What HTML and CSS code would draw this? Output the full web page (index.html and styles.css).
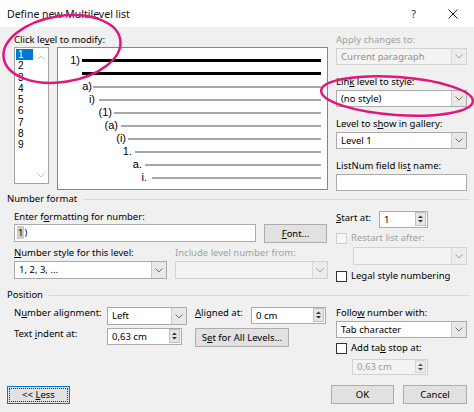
FILE: index.html
```html
<!DOCTYPE html>
<html lang="en">
<head>
<meta charset="utf-8">
<title>Define new Multilevel list</title>
<link rel="stylesheet" href="styles.css">
</head>
<body>
<div class="dialog">
  <div class="titlebar">
    <span class="title">Define new Multilevel list</span>
    <span class="help">?</span>
    <span class="close"><svg width="10" height="10" viewBox="0 0 10 10"><path d="M0.5 0.5 L9.5 9.5 M9.5 0.5 L0.5 9.5" stroke="#222" stroke-width="1" fill="none"/></svg></span>
  </div>

  <div class="top">
    <div class="levels">
      <div class="lbl">Click le<u>v</u>el to modify:</div>
      <div class="levels-row">
        <div class="listbox">
          <div class="items">
            <div class="item sel">1</div>
            <div class="item">2</div>
            <div class="item">3</div>
            <div class="item">4</div>
            <div class="item">5</div>
            <div class="item">6</div>
            <div class="item">7</div>
            <div class="item">8</div>
            <div class="item">9</div>
          </div>
          <div class="vscroll">
            <svg class="sc" width="8" height="5" viewBox="0 0 8 5"><path d="M0.5 4.5 L4 1 L7.5 4.5" fill="none" stroke="#c2c2c2"/></svg>
            <svg class="sc" width="8" height="5" viewBox="0 0 8 5"><path d="M0.5 0.5 L4 4 L7.5 0.5" fill="none" stroke="#c2c2c2"/></svg>
          </div>
        </div>
        <div class="preview">
          <div class="prow"><span class="num n1">1)</span><span class="bar dark"></span></div>
          <div class="prow"><span class="num n1"></span><span class="bar dark"></span></div>
          <div class="prow"><span class="num n3">a)</span><span class="bar"></span></div>
          <div class="prow"><span class="num n4">i)</span><span class="bar"></span></div>
          <div class="prow"><span class="num n5">(1)</span><span class="bar"></span></div>
          <div class="prow"><span class="num n6">(a)</span><span class="bar"></span></div>
          <div class="prow"><span class="num n7">(i)</span><span class="bar"></span></div>
          <div class="prow"><span class="num n8">1.</span><span class="bar"></span></div>
          <div class="prow"><span class="num n9">a.</span><span class="bar"></span></div>
          <div class="prow"><span class="num n10">i.</span><span class="bar"></span></div>
        </div>
      </div>
    </div>

    <div class="side">
      <div class="field">
        <div class="lbl dis">Apply changes to:</div>
        <div class="combo dis"><span class="val">Current paragraph</span><span class="drop"><svg width="8" height="5" viewBox="0 0 8 5"><path d="M0.5 0.5 L4 4 L7.5 0.5" fill="none" stroke="#9a9a9a"/></svg></span></div>
      </div>
      <div class="field">
        <div class="lbl">Lin<u>k</u> level to style:</div>
        <div class="combo"><span class="val">(no style)</span><span class="drop"><svg width="8" height="5" viewBox="0 0 8 5"><path d="M0.5 0.5 L4 4 L7.5 0.5" fill="none" stroke="#707070"/></svg></span></div>
      </div>
      <div class="field">
        <div class="lbl">Level to s<u>h</u>ow in gallery:</div>
        <div class="combo"><span class="val">Level 1</span><span class="drop"><svg width="8" height="5" viewBox="0 0 8 5"><path d="M0.5 0.5 L4 4 L7.5 0.5" fill="none" stroke="#707070"/></svg></span></div>
      </div>
      <div class="field">
        <div class="lbl">ListNum field lis<u>t</u> name:</div>
        <div class="textbox full"></div>
      </div>
    </div>
  </div>

  <div class="group-head nf-head"><span>Number format</span><span class="rule"></span></div>
  <div class="numfmt">
    <div class="nf-left">
      <div class="lbl">Enter f<u>o</u>rmatting for number:</div>
      <div class="fmt-row">
        <div class="textbox fmt"><span class="selected">1</span>)</div>
        <div class="btn font-btn"><span><u>F</u>ont...</span></div>
      </div>
      <div class="style-grid">
        <div class="lbl"><u>N</u>umber style for this level:</div>
        <div class="lbl dis">Include level number from:</div>
        <div class="combo"><span class="val">1, 2, 3, ...</span><span class="drop"><svg width="8" height="5" viewBox="0 0 8 5"><path d="M0.5 0.5 L4 4 L7.5 0.5" fill="none" stroke="#707070"/></svg></span></div>
        <div class="combo dis"><span class="val"></span><span class="drop"><svg width="8" height="5" viewBox="0 0 8 5"><path d="M0.5 0.5 L4 4 L7.5 0.5" fill="none" stroke="#9a9a9a"/></svg></span></div>
      </div>
    </div>
    <div class="nf-right">
      <div class="start-row">
        <span class="lbl start-lbl"><u>S</u>tart at:</span>
        <div class="spin start-spin"><span class="val">1</span><span class="spinbtn"><svg width="7" height="10" viewBox="0 0 7 10"><path d="M1 4 L3.5 1.5 L6 4 Z M1 6 L3.5 8.5 L6 6 Z" fill="#333"/></svg></span></div>
      </div>
      <div class="check-row restart">
        <span class="box dis"></span><span class="lbl dis">Restart list after:</span>
      </div>
      <div class="combo dis restart-combo"><span class="val"></span><span class="drop"><svg width="8" height="5" viewBox="0 0 8 5"><path d="M0.5 0.5 L4 4 L7.5 0.5" fill="none" stroke="#9a9a9a"/></svg></span></div>
      <div class="check-row legal">
        <span class="box"></span><span class="lbl">Le<u>g</u>al style numbering</span>
      </div>
    </div>
  </div>

  <div class="group-head pos-head"><span>Position</span><span class="rule"></span></div>
  <div class="position">
    <div class="pos-left">
      <div class="lbl">N<u>u</u>mber alignment:</div>
      <div class="combo align-combo"><span class="val">Left</span><span class="drop"><svg width="8" height="5" viewBox="0 0 8 5"><path d="M0.5 0.5 L4 4 L7.5 0.5" fill="none" stroke="#707070"/></svg></span></div>
      <div></div>
      <div class="lbl"><u>A</u>ligned at:</div>
      <div class="spin"><span class="val">0 cm</span><span class="spinbtn"><svg width="7" height="10" viewBox="0 0 7 10"><path d="M1 4 L3.5 1.5 L6 4 Z M1 6 L3.5 8.5 L6 6 Z" fill="#333"/></svg></span></div>
      <div class="lbl">Text <u>i</u>ndent at:</div>
      <div class="spin indent-spin"><span class="val">0,63 cm</span><span class="spinbtn"><svg width="7" height="10" viewBox="0 0 7 10"><path d="M1 4 L3.5 1.5 L6 4 Z M1 6 L3.5 8.5 L6 6 Z" fill="#333"/></svg></span></div>
      <div></div>
      <div class="btn setall"><span>S<u>e</u>t for All Levels...</span></div>
    </div>
    <div class="pos-right">
      <div class="lbl">Follo<u>w</u> number with:</div>
      <div class="combo follow-combo"><span class="val">Tab character</span><span class="drop"><svg width="8" height="5" viewBox="0 0 8 5"><path d="M0.5 0.5 L4 4 L7.5 0.5" fill="none" stroke="#707070"/></svg></span></div>
      <div class="check-row tabstop">
        <span class="box"></span><span class="lbl">Add ta<u>b</u> stop at:</span>
      </div>
      <div class="spin dis tab-spin"><span class="val">0,63 cm</span><span class="spinbtn"><svg width="7" height="10" viewBox="0 0 7 10"><path d="M1 4 L3.5 1.5 L6 4 Z M1 6 L3.5 8.5 L6 6 Z" fill="#555"/></svg></span></div>
    </div>
  </div>

  <div class="footer">
    <div class="btn less"><span class="focus"><span>&lt;&lt; <u>L</u>ess</span></span></div>
    <div class="spacer"></div>
    <div class="btn ok"><span>OK</span></div>
    <div class="btn cancel"><span>Cancel</span></div>
  </div>

  <svg class="marks" width="474" height="412" viewBox="0 0 474 412">
    <ellipse cx="62" cy="49" rx="59" ry="33" transform="rotate(-9 62 49)" fill="none" stroke="#e2157f" stroke-width="2.5"/>
    <ellipse cx="397" cy="96" rx="76" ry="19" transform="rotate(4 397 96)" fill="none" stroke="#e2157f" stroke-width="2.5"/>
  </svg>
</div>
</body>
</html>
```

FILE: styles.css
```css
* { box-sizing: border-box; }
html, body { margin: 0; padding: 0; background: #f0f0f0; }

.dialog {
  position: relative;
  width: 474px;
  height: 412px;
  background: #f0f0f0;
  font-family: "Noto Sans", "Open Sans", sans-serif;
  font-size: 9.5px;
  color: #000;
  display: flex;
  flex-direction: column;
  overflow: hidden;
}

u { text-decoration: underline; text-underline-offset: 1px; }

.titlebar {
  height: 27px;
  background: #fff;
  display: flex;
  align-items: center;
  padding-left: 7px;
  flex-shrink: 0;
}
.title { flex: 1; font-size: 10.5px; color: #111; }
.help { font-size: 11px; color: #333; margin-right: 32px; }
.close { display: flex; margin-right: 16px; }

.lbl { line-height: 14px; height: 14px; white-space: nowrap; }
.dis { color: #a0a0a0; }

/* top area */
.top {
  display: flex;
  gap: 8px;
  padding: 6px 7px 0 14px;
  height: 164px;
  flex-shrink: 0;
}
.levels { width: 314px; }
.levels-row { display: flex; gap: 8px; align-items: flex-start; }

.listbox {
  width: 35px;
  height: 137px;
  background: #fff;
  border: 1px solid #a3a3a3;
  padding: 1px 0 0 1px;
  display: flex;
}
.items { width: 17px; }
.item {
  height: 11.25px;
  line-height: 11.25px;
  padding-left: 2px;
  font-family: "Liberation Sans", Arial, sans-serif;
  font-size: 10px;
}
.item.sel { background: #0078d7; color: #fff; }
.vscroll {
  flex: 1;
  display: flex;
  flex-direction: column;
  align-items: center;
  justify-content: space-between;
  padding: 6px 0 5px;
}

.preview {
  width: 271px;
  height: 143px;
  background: #fff;
  border: 1px solid #858585;
  padding-top: 6px;
  font-family: "Liberation Sans", Arial, sans-serif;
  font-size: 11px;
  color: #000;
}
.prow { height: 13px; display: flex; align-items: center; padding-right: 6px; }
.num { text-align: right; padding-right: 2px; line-height: 13px; flex-shrink: 0; color: #000; }
.n1 { width: 24px; }
.n3 { width: 35px; padding-right: 1px; }
.n4 { width: 41px; padding-right: 4px; }
.n5 { width: 56px; }
.n6 { width: 63px; padding-right: 3px; }
.n7 { width: 70px; }
.n8 { width: 77px; padding-right: 3px; }
.n9 { width: 87px; padding-right: 3px; }
.n10 { width: 94px; padding-right: 5px; }
.bar { flex: 1; height: 2px; background: #a8a8a8; }
.bar.dark { height: 3px; background: #000; }

.side { width: 131px; display: flex; flex-direction: column; gap: 10px; }
.field .lbl { margin-bottom: 1px; }

/* controls */
.combo {
  height: 17px;
  background: #fff;
  border: 1px solid #a9a9a9;
  display: flex;
  align-items: stretch;
}
.combo .val { flex: 1; padding-left: 4px; line-height: 15px; white-space: nowrap; overflow: hidden; }
.combo .drop {
  width: 15px;
  background: #e8e8e8;
  border-left: 1px solid #cacaca;
  display: flex;
  align-items: center;
  justify-content: center;
}
.combo.dis { background: #f3f3f3; border-color: #d2d2d2; color: #8e8e8e; }
.combo.dis .drop { background: #ececec; border-left-color: #dadada; }

.textbox {
  height: 18px;
  background: #fff;
  border: 1px solid #ababab;
  line-height: 16px;
  padding-left: 2px;
}
.textbox.full { height: 17px; }

.spin {
  height: 17px;
  background: #fff;
  border: 1px solid #ababab;
  display: flex;
  align-items: stretch;
}
.spin .val { flex: 1; padding-left: 4px; line-height: 15px; white-space: nowrap; }
.spinbtn {
  width: 11px;
  margin: 0 1px 1px 0;
  background: #e6e6e6;
  border: 1px solid #c0c0c0;
  display: flex;
  align-items: center;
  justify-content: center;
}
.spin.dis { background: #f3f3f3; border-color: #d2d2d2; color: #9a9a9a; }
.spin.dis .spinbtn { background: #ebebeb; border-color: #d6d6d6; }

.btn {
  height: 19px;
  background: #e1e1e1;
  border: 1px solid #adadad;
  display: flex;
  align-items: center;
  justify-content: center;
  line-height: 14px;
  white-space: nowrap;
}

.box {
  width: 11px;
  height: 11px;
  border: 1px solid #333;
  background: #fff;
  flex-shrink: 0;
}
.box.dis { border-color: #d0d0d0; background: #f7f7f7; }
.check-row { display: flex; align-items: center; gap: 4px; height: 12px; }

/* group headers */
.group-head {
  display: flex;
  align-items: center;
  gap: 6px;
  height: 14px;
  line-height: 14px;
  padding: 0 4px 0 7px;
  flex-shrink: 0;
}
.rule { flex: 1; height: 1px; background: #dadada; }
.nf-head { margin-top: 1px; }
.pos-head { margin-top: 6px; }

/* number format */
.numfmt { display: flex; gap: 8px; padding-left: 14px; height: 76px; flex-shrink: 0; }
.nf-left { width: 314px; padding-top: 4px; }
.fmt-row { display: flex; gap: 8px; }
.fmt { width: 242px; }
.selected { background: #cccccc; padding: 0 1px; }
.font-btn { width: 63px; }
.style-grid {
  display: grid;
  grid-template-columns: 153px 153px;
  column-gap: 8px;
  margin-top: 3px;
}
.style-grid .lbl { margin-bottom: 1px; }
.style-grid .combo { height: 18px; }

.nf-right { width: 131px; padding-top: 5px; }
.start-row { display: flex; align-items: flex-start; height: 17px; }
.start-lbl { width: 43px; line-height: 13px; }
.start-spin { width: 49px; }
.restart { margin-top: 4px; }
.restart-combo { margin: 3px 0 0 17px; height: 18px; }
.legal { margin-top: 5px; }

/* position */
.position { display: flex; gap: 10px; padding-left: 14px; flex-shrink: 0; }
.pos-left {
  width: 312px;
  padding-top: 5px;
  display: grid;
  grid-template-columns: 93px 80px 8px 56px 75px;
  grid-template-rows: 18px 19px;
  row-gap: 3px;
  align-items: start;
}
.pos-left .lbl { margin-top: -1px; }
.align-combo { height: 18px; }
.indent-spin { width: 75px; }
.setall { grid-column: 4 / span 2; width: 94px; }

.pos-right { width: 131px; padding-top: 4px; }
.follow-combo { margin-top: 1px; }
.tabstop { margin-top: 4px; }
.tab-spin { margin: 5px 0 0 16px; width: 76px; height: 16px; }
.tab-spin .val { line-height: 14px; }

/* footer */
.footer {
  margin-top: auto;
  display: flex;
  align-items: center;
  padding: 0 7px 8px 7px;
}
.spacer { flex: 1; }
.less { width: 63px; height: 18px; border-color: #0078d7; padding: 1px; }
.less .focus {
  flex: 1;
  height: 100%;
  border: 1px dotted #333;
  display: flex;
  align-items: center;
  justify-content: center;
}
.ok { width: 63px; margin-right: 9px; }
.cancel { width: 64px; }

.marks { position: absolute; left: 0; top: 0; pointer-events: none; }
```
